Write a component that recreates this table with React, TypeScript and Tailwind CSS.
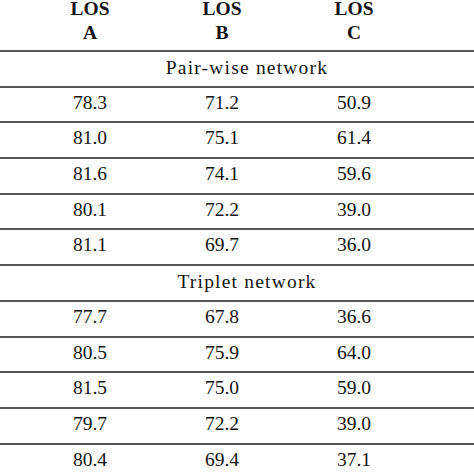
const pairWise = [
  ['78.3', '71.2', '50.9'],
  ['81.0', '75.1', '61.4'],
  ['81.6', '74.1', '59.6'],
  ['80.1', '72.2', '39.0'],
  ['81.1', '69.7', '36.0'],
];

const triplet = [
  ['77.7', '67.8', '36.6'],
  ['80.5', '75.9', '64.0'],
  ['81.5', '75.0', '59.0'],
  ['79.7', '72.2', '39.0'],
  ['80.4', '69.4', '37.1'],
];

function Row({ values }: { values: string[] }) {
  return (
    <div className="flex h-[35.7px] shrink-0 border-t-2 border-[#555] pl-[24px] leading-[30px]">
      {values.map((v, i) => (
        <div key={i} className="w-[132px] text-center">
          {v}
        </div>
      ))}
    </div>
  );
}

function Section({ label }: { label: string }) {
  return (
    <div className="h-[35.7px] shrink-0 border-t-2 border-[#555] pl-[24px] pr-[4px] text-center leading-[31px] tracking-[1.2px]">
      {label}
    </div>
  );
}

export default function App() {
  return (
    <div
      className="flex h-[474px] w-[474px] flex-col overflow-hidden bg-white text-[19.5px] text-[#141414]"
      style={{ fontFamily: '"Liberation Serif", "Times New Roman", serif' }}
    >
      {/* column headings */}
      <div className="flex h-[50px] shrink-0 pl-[24px] font-bold leading-[17px]">
        {['A', 'B', 'C'].map(c => (
          <div key={c} className="flex w-[132px] flex-col items-center gap-[7px]">
            <span>LOS</span>
            <span>{c}</span>
          </div>
        ))}
      </div>

      <Section label="Pair-wise network" />
      {pairWise.map((r, i) => (
        <Row key={`p${i}`} values={r} />
      ))}

      <Section label="Triplet network" />
      {triplet.map((r, i) => (
        <Row key={`t${i}`} values={r} />
      ))}
    </div>
  );
}
